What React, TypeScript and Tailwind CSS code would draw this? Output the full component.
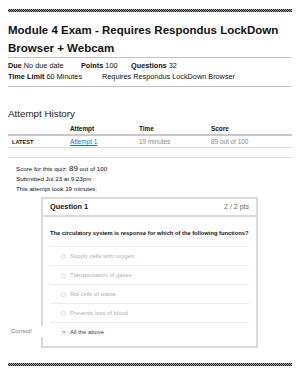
export default function App() {
  const answers = [
    { text: "Supply cells with oxygen", picked: false },
    { text: "Transportation of gases", picked: false },
    { text: "Rid cells of waste", picked: false },
    { text: "Prevents loss of blood", picked: false },
    { text: "All the above", picked: true },
  ];

  return (
    <div className="w-[300px] h-[388px] bg-white px-2 pt-[9px] font-['Liberation_Sans',Arial,sans-serif] text-[#222] overflow-hidden">
      {/* torn edge */}
      <div className="h-[3px] w-full [background-image:repeating-conic-gradient(#222_0_25%,#a0a0a0_0_50%)] [background-size:2px_2px]"></div>

      <h1 className="mt-[9px] text-[11.5px] leading-[18px] font-bold text-[#111]">
        Module 4 Exam - Requires Respondus LockDown Browser + Webcam
      </h1>

      <div className="border-t border-b border-[#c4c4c4] pt-[2px] pb-[4px] text-[7.3px] leading-[11px] text-[#111]">
        <div className="flex">
          <span className="w-[73px]"><b>Due</b> No due date</span>
          <span className="w-[50px]"><b>Points</b> 100</span>
          <span><b>Questions</b> 32</span>
        </div>
        <div className="flex">
          <span className="w-[94px]"><b>Time Limit</b> 60 Minutes</span>
          <span>Requires Respondus LockDown Browser</span>
        </div>
      </div>

      <h2 className="mt-[20px] text-[9.8px] leading-[14px] text-[#222]">Attempt History</h2>

      <div className="mt-[3px] text-[6.4px]">
        <div className="grid grid-cols-[58px_69px_72px_1fr] pl-[4px] border-b-2 border-[#c8c8c8] font-bold text-[#111] leading-[10px]">
          <span></span>
          <span>Attempt</span>
          <span>Time</span>
          <span>Score</span>
        </div>
        <div className="grid grid-cols-[58px_69px_72px_1fr] pl-[4px] pt-[1px] border-b border-[#dcdcdc] leading-[10px]">
          <span className="font-bold text-[#111] text-[5.6px]">LATEST</span>
          <span className="text-[#0a7ae0] underline">Attempt 1</span>
          <span className="text-[#888]">19 minutes</span>
          <span className="text-[#888]">89 out of 100</span>
        </div>
        <div className="mt-[9px] border-t border-[#dcdcdc]"></div>
      </div>

      <div className="mt-[6px] pl-[8px] text-[6.2px] leading-[10px] text-[#111]">
        <div>Score for this quiz: <span className="text-[8px]">89</span> out of 100</div>
        <div>Submitted Jul 23 at 9:23pm</div>
        <div>This attempt took 19 minutes.</div>
      </div>

      <div className="relative mt-[3px] ml-[33px] w-[217px] border-2 border-[#dadada]">
        <div className="flex justify-between items-center px-[7px] h-[18px] border-b-2 border-[#dadada]">
          <span className="text-[7.4px] font-bold text-[#111]">Question 1</span>
          <span className="text-[7px] text-[#666]">2 / 2 pts</span>
        </div>
        <div className="px-[7px] pt-[11px] pb-[5px]">
          <div className="text-[5.75px] font-bold text-[#111] leading-[10px] whitespace-nowrap">
            The circulatory system is response for which of the following functions?
          </div>
          <div className="mt-[8px]">
            {answers.map((a, i) => (
              <div key={i} className="flex items-center h-[19px] border-t border-[#ececec] pl-[11px]">
                <span className="w-[5px] h-[5px] rounded-full border border-[#dadada] flex items-center justify-center mr-[4px]">
                  {a.picked && <span className="w-[2px] h-[2px] rounded-full bg-[#aaa]"></span>}
                </span>
                <span className={`text-[5.9px] ${a.picked ? "text-[#444]" : "text-[#b0b0b0]"}`}>{a.text}</span>
              </div>
            ))}
          </div>
        </div>
        <div className="absolute left-[-35px] top-[127px] w-[36px] h-[11px] bg-white text-[5.9px] leading-[11px] text-[#777] pl-[3px]">
          Correct!
        </div>
      </div>

      <div className="mt-[15px] h-[3px] w-full [background-image:repeating-conic-gradient(#222_0_25%,#a0a0a0_0_50%)] [background-size:2px_2px]"></div>
    </div>
  );
}
